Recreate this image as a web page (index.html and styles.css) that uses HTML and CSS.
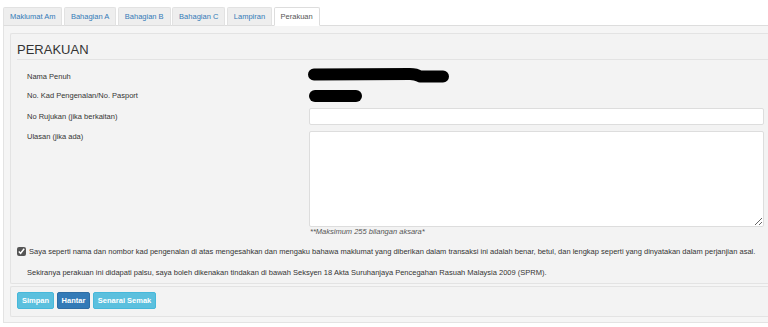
FILE: index.html
```html
<!DOCTYPE html>
<html lang="ms">
<head>
  <meta charset="UTF-8" />
  <meta name="viewport" content="width=device-width, initial-scale=1" />
  <title>Perakuan</title>
  <link rel="stylesheet" href="styles.css">
</head>
<body>

  <div class="page">
    <ul class="tabs">
      <li><a href="#">Maklumat Am</a></li>
      <li><a href="#">Bahagian A</a></li>
      <li><a href="#">Bahagian B</a></li>
      <li><a href="#">Bahagian C</a></li>
      <li><a href="#">Lampiran</a></li>
      <li class="active"><a href="#">Perakuan</a></li>
    </ul>

    <div class="tab-panel">
      <div class="well main">
        <h3 class="title">PERAKUAN</h3>

        <div class="form">
          <div class="row row-name">
            <label>Nama Penuh</label>
            <svg class="redact" width="142" height="16" viewBox="0 0 142 16">
              <path d="M6 5.5 L102 5 Q108 5 112 7.5 L135 7.5" fill="none" stroke="#000" stroke-width="12" stroke-linecap="round" stroke-linejoin="round"/>
            </svg>
          </div>
          <div class="row row-id">
            <label>No. Kad Pengenalan/No. Pasport</label>
            <div class="redact-pill"></div>
          </div>
          <div class="row row-ref">
            <label for="rujukan">No Rujukan (jika berkaitan)</label>
            <input type="text" id="rujukan">
          </div>
          <div class="row row-note">
            <label for="ulasan">Ulasan (jika ada)</label>
            <textarea id="ulasan"></textarea>
          </div>
          <div class="row row-hint">
            <span></span>
            <em>**Maksimum 255 bilangan aksara*</em>
          </div>
        </div>

        <label class="agree">
          <input type="checkbox" checked>
          Saya seperti nama dan nombor kad pengenalan di atas mengesahkan dan mengaku bahawa maklumat yang diberikan dalam transaksi ini adalah benar, betul, dan lengkap seperti yang dinyatakan dalam perjanjian asal.
        </label>
        <p class="warning">Sekiranya perakuan ini didapati palsu, saya boleh dikenakan tindakan di bawah Seksyen 18 Akta Suruhanjaya Pencegahan Rasuah Malaysia 2009 (SPRM).</p>
      </div>

      <div class="well actions">
        <button class="btn btn-info">Simpan</button>
        <button class="btn btn-primary">Hantar</button>
        <button class="btn btn-info">Senarai Semak</button>
      </div>
    </div>
  </div>

</body>
</html>
```

FILE: styles.css
```css
* {
  box-sizing: border-box;
}
html,
body {
  margin: 0;
  background: #fff;
  overflow: hidden;
}
body {
  font-family: "Liberation Sans", Arial, sans-serif;
  font-size: 7.5px;
  color: #333;
}
.page {
  padding: 7px 0 0 3px;
}
/* Tabs */
.tabs {
  display: flex;
  list-style: none;
  margin: 0;
  padding: 0;
  height: 19px;
  border-bottom: 1px solid #ddd;
}
.tabs li {
  margin-right: 1.5px;
}
.tabs a {
  display: block;
  height: 19px;
  line-height: 17px;
  padding: 0 6px;
  border: 1px solid #e2e2e2;
  border-bottom-color: #ddd;
  border-radius: 2px 2px 0 0;
  background: #eee;
  color: #337ab7;
  text-decoration: none;
}
.tabs .active a {
  background: #fff;
  color: #555;
  border-color: #ddd;
  border-bottom-color: #fff;
}
/* Panels */
.tab-panel {
  background: #f5f5f5;
  border: 1px solid #e3e3e3;
  border-top: 0;
  border-right: 0;
  padding: 7px 0 5px 6px;
}
.well {
  background: #f3f3f3;
  border: 1px solid #e3e3e3;
  border-right: 0;
  border-radius: 2px 0 0 2px;
  padding-left: 6px;
}
.well.main {
  height: 251px;
}
.title {
  margin: 0;
  padding: 8px 0 2px;
  font-size: 13px;
  line-height: 15px;
  font-weight: normal;
  color: #333;
  border-bottom: 1px solid #e3e3e3;
}
/* Form rows */
.form {
  padding: 9px 0 0 10px;
}
.row {
  display: grid;
  grid-template-columns: 282px 455px;
  align-items: center;
}
.row label {
  line-height: 12px;
}
.row-name {
  height: 16px;
}
.row-id {
  height: 15px;
  margin-top: 3px;
}
.row-ref {
  height: 17px;
  margin-top: 5px;
}
.row-note {
  margin-top: 6px;
  align-items: start;
}
.row-hint {
  line-height: 9px;
}
.row-hint em {
  color: #555;
  padding-left: 1px;
}
.redact {
  overflow: visible;
  margin-left: -1px;
}
.redact-pill {
  width: 53px;
  height: 12px;
  border-radius: 6px;
  background: #000;
}
.row input,
.row textarea {
  display: block;
  width: 455px;
  margin: 0;
  border: 1px solid #ddd;
  border-radius: 2px;
  background: #fff;
  font: inherit;
}
.row input {
  height: 17px;
}
.row textarea {
  height: 96px;
  resize: vertical;
}
/* Declaration */
.agree {
  display: flex;
  align-items: center;
  gap: 3px;
  height: 12px;
  margin-top: 9px;
}
.agree input {
  width: 9px;
  height: 9px;
  margin: 0;
  accent-color: #555;
}
.warning {
  margin: 10px 0 0;
  padding-left: 10px;
  line-height: 12px;
}
/* Buttons */
.actions {
  display: flex;
  gap: 2.5px;
  height: 31px;
  margin-top: 2px;
  padding-top: 5px;
}
.btn {
  height: 17px;
  padding: 0 4px;
  border: 1px solid;
  border-radius: 2px;
  font: bold 7.5px "Liberation Sans", Arial, sans-serif;
  color: #fff;
  cursor: pointer;
}
.btn-info {
  background: #5bc0de;
  border-color: #46b8da;
}
.btn-primary {
  background: #337ab7;
  border-color: #2e6da4;
}
```
